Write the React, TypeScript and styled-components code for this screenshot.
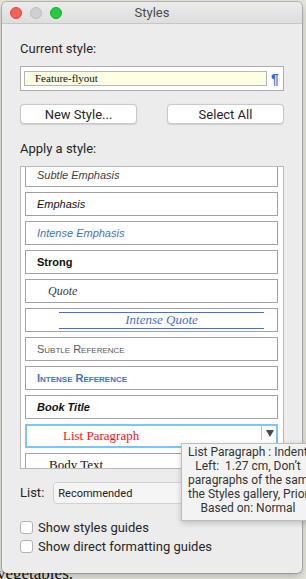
import React from 'react'
import styled, { createGlobalStyle, css } from 'styled-components'

const GlobalStyle = createGlobalStyle`
  html, body {
    margin: 0;
    padding: 0;
  }
  body {
    font-family: Roboto, "Liberation Sans", sans-serif;
    overflow: hidden;
  }
`

const Desktop = styled.div`
  position: relative;
  width: 306px;
  height: 579px;
  overflow: hidden;
  box-sizing: border-box;
  padding: 2px 4px 0 2px;
  background: #e7e6de;
`

const DocText = styled.span`
  position: absolute;
  left: -3px;
  top: 565px;
  font: 17px/17px "Liberation Serif", serif;
  color: #111;
`

const Window = styled.div`
  position: relative;
  z-index: 1;
  width: 300px;
  height: 571px;
  display: flex;
  flex-direction: column;
  border-radius: 5px;
  overflow: hidden;
  background: #ececec;
  box-shadow: 0 0 0 1px rgba(0, 0, 0, 0.18), 0 3px 10px rgba(0, 0, 0, 0.25);
`

const TitleBar = styled.div`
  height: 21px;
  display: grid;
  grid-template-columns: 1fr auto 1fr;
  align-items: center;
  border-bottom: 1px solid #c6c6c6;
  background: linear-gradient(#ebebeb, #dedede);
`

const Lights = styled.div`
  display: flex;
  gap: 8px;
  padding-left: 8px;
`

const Light = styled.span<{ $color: string; $edge: string }>`
  width: 12px;
  height: 12px;
  box-sizing: border-box;
  border-radius: 50%;
  background: ${({ $color }) => $color};
  border: 0.5px solid ${({ $edge }) => $edge};
`

const Title = styled.span`
  font-size: 13px;
  color: #4b4b4b;
`

const Body = styled.div`
  display: flex;
  flex-direction: column;
  padding: 17px 18px 0 18px;
`

const Label = styled.div<{ $gap?: number }>`
  margin-top: ${({ $gap = 0 }) => $gap}px;
  font-size: 13px;
  line-height: 16px;
  color: #262626;
`

const CurrentBox = styled.div`
  margin-top: 9px;
  height: 25px;
  display: flex;
  align-items: center;
  box-sizing: border-box;
  padding: 0 3px;
  border: 1px solid #adadad;
  background: #fff;
`

const CurrentField = styled.div`
  width: 243px;
  height: 15px;
  box-sizing: border-box;
  padding-left: 10px;
  border: 1px solid #b6b6b6;
  background: #fefee2;
  font: 11px/13px "Liberation Serif", serif;
  color: #111;
`

const Pilcrow = styled.span`
  margin-left: 4px;
  font: bold 14px/14px "Liberation Sans", sans-serif;
  color: #2f6fd6;
`

const ButtonRow = styled.div`
  margin-top: 13px;
  display: flex;
  justify-content: space-between;
`

const Button = styled.button`
  width: 117px;
  height: 20px;
  padding: 0;
  border: 1px solid #c9c9c9;
  border-radius: 4px;
  background: #fff;
  box-shadow: 0 0.5px 1px rgba(0, 0, 0, 0.12);
  font-family: inherit;
  font-size: 13px;
  color: #262626;
`

const StyleList = styled.div`
  margin-top: 9px;
  height: 303px;
  box-sizing: border-box;
  overflow: hidden;
  padding: 0 5px 0 4px;
  border: 1px solid #b9b9b9;
  background: #fff;
`

const Stack = styled.div`
  margin-top: -4px;
  display: flex;
  flex-direction: column;
  gap: 5px;
`

const StyleItem = styled.div<{ $indent?: number; $selected?: boolean }>`
  height: 24px;
  flex-shrink: 0;
  display: flex;
  align-items: center;
  box-sizing: border-box;
  padding-left: ${({ $indent = 11 }) => $indent}px;
  border: 1px solid #a2a2a2;

  ${({ $selected }) =>
    $selected &&
    css`
      align-items: stretch;
      border-color: #79c7f6;
      box-shadow: inset 0 0 0 1px #79c7f6;
    `}
`

type Variant =
  | 'subtle'
  | 'emphasis'
  | 'intense'
  | 'strong'
  | 'quote'
  | 'iquote'
  | 'subref'
  | 'intref'
  | 'book'
  | 'listpara'
  | 'body'

const variants: Record<Variant, ReturnType<typeof css>> = {
  subtle: css`
    font: italic 11px "Liberation Sans", sans-serif;
    color: #404040;
  `,
  emphasis: css`
    font: italic 11px "Liberation Sans", sans-serif;
    color: #111;
  `,
  intense: css`
    font: italic 11px "Liberation Sans", sans-serif;
    color: #4472c4;
  `,
  strong: css`
    font: bold 11px "Liberation Sans", sans-serif;
    color: #111;
  `,
  quote: css`
    font: italic 12px "Liberation Serif", serif;
    color: #404040;
  `,
  iquote: css`
    font: italic 13px "Liberation Serif", serif;
    color: #4472c4;
  `,
  subref: css`
    font: 11px "Liberation Sans", sans-serif;
    font-variant: small-caps;
    color: #5a5a5a;
  `,
  intref: css`
    font: bold 11px "Liberation Sans", sans-serif;
    font-variant: small-caps;
    color: #4472c4;
  `,
  book: css`
    font: bold italic 11px "Liberation Sans", sans-serif;
    color: #111;
  `,
  listpara: css`
    font: 13px "Liberation Serif", serif;
    color: #ff1010;
  `,
  body: css`
    font: 13px "Liberation Serif", serif;
    color: #111;
  `,
}

const ItemText = styled.span<{ $variant: Variant }>`
  white-space: nowrap;
  ${({ $variant }) => variants[$variant]}
`

const QuoteRule = styled.div`
  width: 205px;
  height: 17px;
  margin-left: 33px;
  display: flex;
  align-items: center;
  justify-content: center;
  box-sizing: border-box;
  border-top: 1px solid #4472c4;
  border-bottom: 1px solid #4472c4;
`

const SelectedText = styled.div`
  flex: 1;
  display: flex;
  align-items: center;
`

const DropButton = styled.div`
  width: 15px;
  height: 15px;
  display: flex;
  align-items: center;
  justify-content: center;
  border-left: 1px solid #c4c4c4;

  &::after {
    content: '';
    margin-top: 1px;
    border-left: 4px solid transparent;
    border-right: 4px solid transparent;
    border-top: 7px solid #4a4a4a;
  }
`

const ListRow = styled.div`
  margin-top: 13px;
  display: flex;
  align-items: center;
  gap: 9px;
`

const Select = styled.div`
  flex: 1;
  height: 22px;
  display: flex;
  align-items: center;
  box-sizing: border-box;
  padding-left: 4px;
  border: 1px solid #d2d2d2;
  border-radius: 4px;
  background: #f5f5f5;
  font-size: 11px;
  color: #222;
`

const Checks = styled.div`
  margin-top: 14px;
  display: flex;
  flex-direction: column;
`

const CheckRow = styled.label`
  height: 19px;
  display: flex;
  align-items: center;
  gap: 5px;
  font-size: 13px;
  color: #262626;
`

const CheckBox = styled.span`
  width: 13px;
  height: 13px;
  box-sizing: border-box;
  border: 1px solid #b3b3b3;
  border-radius: 3px;
  background: #fff;
`

const Tooltip = styled.div`
  position: absolute;
  z-index: 2;
  left: 181px;
  top: 443px;
  width: 134px;
  box-sizing: border-box;
  padding: 1px 6px 5px;
  border: 1px solid #bdbdbd;
  background: #f3f3f3;
  box-shadow: 0 2px 6px rgba(0, 0, 0, 0.2);
  font-size: 12px;
  line-height: 14px;
  color: #333;
  text-align: center;
  white-space: pre;
`

const styles: { name: string; variant: Variant; indent?: number }[] = [
  { name: 'Subtle Emphasis', variant: 'subtle' },
  { name: 'Emphasis', variant: 'emphasis' },
  { name: 'Intense Emphasis', variant: 'intense' },
  { name: 'Strong', variant: 'strong' },
  { name: 'Quote', variant: 'quote', indent: 22 },
  { name: 'Intense Quote', variant: 'iquote', indent: 0 },
  { name: 'Subtle Reference', variant: 'subref' },
  { name: 'Intense Reference', variant: 'intref' },
  { name: 'Book Title', variant: 'book' },
  { name: 'List Paragraph', variant: 'listpara', indent: 37 },
  { name: 'Body Text', variant: 'body', indent: 23 },
]

const tipLines = [
  'List Paragraph : Indent:',
  'Left:  1.27 cm, Don\u2019t',
  'paragraphs of the same style,',
  'the Styles gallery, Priority: 35',
  'Based on: Normal',
]

export default function App() {
  return (
    <Desktop>
      <GlobalStyle />
      <DocText>vegetables.</DocText>
      <Window>
        <TitleBar>
          <Lights>
            <Light $color="#fe5f57" $edge="#e2463f" />
            <Light $color="#d0d0d0" $edge="#bdbdbd" />
            <Light $color="#28c840" $edge="#1aab29" />
          </Lights>
          <Title>Styles</Title>
          <span />
        </TitleBar>
        <Body>
          <Label>Current style:</Label>
          <CurrentBox>
            <CurrentField>Feature-flyout</CurrentField>
            <Pilcrow>¶</Pilcrow>
          </CurrentBox>
          <ButtonRow>
            <Button>New Style...</Button>
            <Button>Select All</Button>
          </ButtonRow>
          <Label $gap={17}>Apply a style:</Label>
          <StyleList>
            <Stack>
              {styles.map((s) => {
                if (s.variant === 'iquote') {
                  return (
                    <StyleItem key={s.name} $indent={s.indent}>
                      <QuoteRule>
                        <ItemText $variant={s.variant}>{s.name}</ItemText>
                      </QuoteRule>
                    </StyleItem>
                  )
                }
                if (s.variant === 'listpara') {
                  return (
                    <StyleItem key={s.name} $indent={s.indent} $selected>
                      <SelectedText>
                        <ItemText $variant={s.variant}>{s.name}</ItemText>
                      </SelectedText>
                      <DropButton />
                    </StyleItem>
                  )
                }
                return (
                  <StyleItem key={s.name} $indent={s.indent}>
                    <ItemText $variant={s.variant}>{s.name}</ItemText>
                  </StyleItem>
                )
              })}
            </Stack>
          </StyleList>
          <ListRow>
            <Label>List:</Label>
            <Select>Recommended</Select>
          </ListRow>
          <Checks>
            <CheckRow>
              <CheckBox />
              Show styles guides
            </CheckRow>
            <CheckRow>
              <CheckBox />
              Show direct formatting guides
            </CheckRow>
          </Checks>
        </Body>
      </Window>
      <Tooltip>
        {tipLines.map((line) => (
          <div key={line}>{line}</div>
        ))}
      </Tooltip>
    </Desktop>
  )
}
